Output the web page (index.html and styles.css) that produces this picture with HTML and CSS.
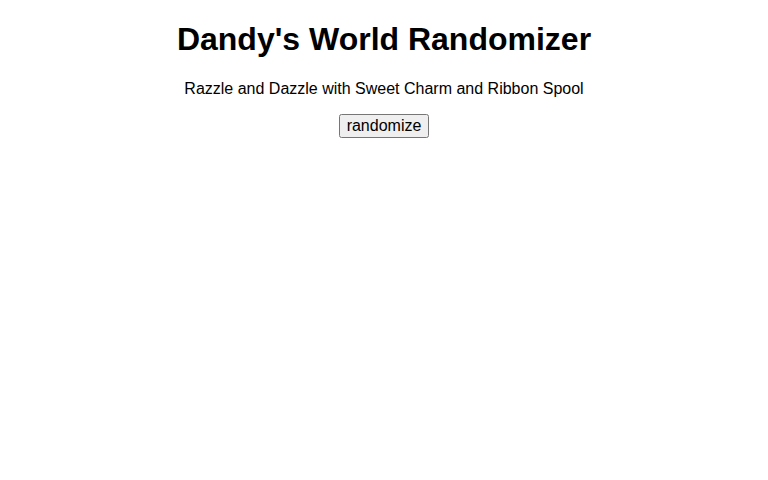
FILE: index.html
```html
<!DOCTYPE html>
<html lang="en">
<head>
    <meta charset="UTF-8">
    <meta name="viewport" content="width=device-width, initial-scale=1.0">
    <title>Dandy's World Randomizer</title>
    <link rel="stylesheet" href="styles.css">
</head>
<body>
  <h1>Dandy's World Randomizer</h1>
  <p id="result">Razzle and Dazzle with Sweet Charm and Ribbon Spool</p>
  <button type="button" class="randomize-btn">randomize</button>
</body>
</html>
```

FILE: styles.css
```css
body {
  font-family: "Liberation Sans", Arial, sans-serif;
  text-align: center;
  background-color: #fff;
  color: #000;
  }
h1 {
  font-size: 32px;
  margin: 13px 0 22px;
  }
.randomize-btn {
  font-family: "Liberation Sans", Arial, sans-serif;
  font-size: 16px;
  padding: 1px 6px;
  }
```
